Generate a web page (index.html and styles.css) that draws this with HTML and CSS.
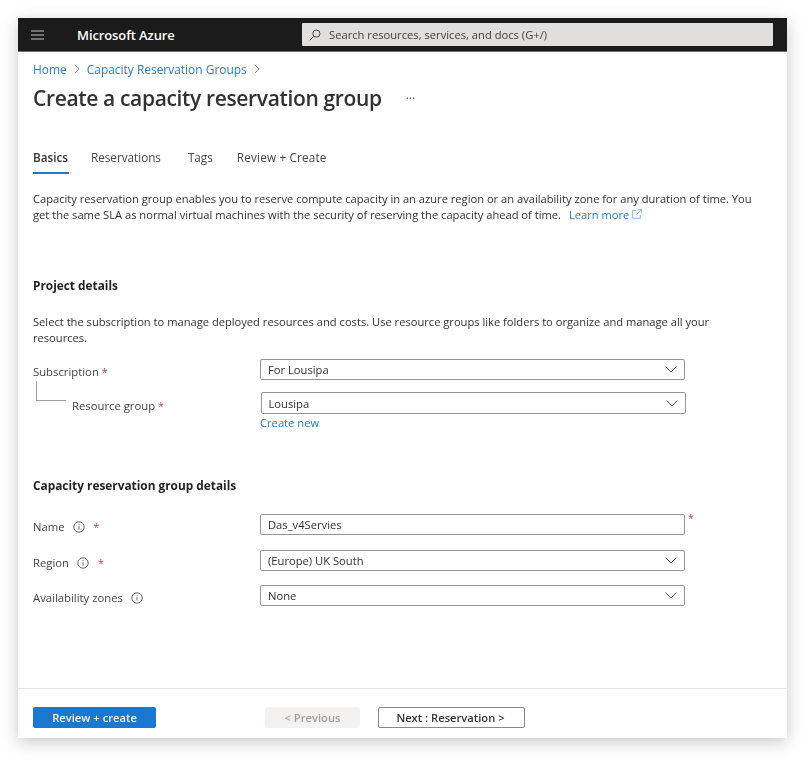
FILE: index.html
```html
<!DOCTYPE html>
<html lang="en">
<head>
<meta charset="utf-8">
<title>Create a capacity reservation group</title>
<link rel="stylesheet" href="styles.css">
</head>
<body>
<div class="panel">
  <header class="topbar">
    <svg class="menu-icon" width="13" height="10" viewBox="0 0 13 10"><path d="M0 1h13M0 5h13M0 9h13" stroke="#c8c8c8" stroke-width="1.1" fill="none"/></svg>
    <div class="brand">Microsoft Azure</div>
    <div class="search">
      <svg class="search-icon" width="12" height="12" viewBox="0 0 12 12"><circle cx="7.4" cy="4.6" r="3.6" fill="none" stroke="#444" stroke-width="1"/><path d="M4.8 7.2 0.8 11.2" stroke="#444" stroke-width="1" fill="none"/></svg>
      <span>Search resources, services, and docs (G+/)</span>
    </div>
  </header>
  <main class="content">
    <nav class="crumbs">
      <a class="link">Home</a>
      <svg class="crumb-sep" width="6" height="10" viewBox="0 0 6 10"><path d="M0.8 0.8 5 5 0.8 9.2" fill="none" stroke="#777" stroke-width="0.9"/></svg>
      <a class="link">Capacity Reservation Groups</a>
      <svg class="crumb-sep" width="6" height="10" viewBox="0 0 6 10"><path d="M0.8 0.8 5 5 0.8 9.2" fill="none" stroke="#777" stroke-width="0.9"/></svg>
    </nav>
    <div class="title-row">
      <h1>Create a capacity reservation group</h1>
      <span class="more">···</span>
    </div>
    <div class="tabs">
      <div class="tab active">Basics</div>
      <div class="tab">Reservations</div>
      <div class="tab tags">Tags</div>
      <div class="tab review">Review + Create</div>
    </div>
    <p class="desc">Capacity reservation group enables you to reserve compute capacity in an azure region or an availability zone for any duration of time. You get the same SLA as normal virtual machines with the security of reserving the capacity ahead of time. <a class="link learn">Learn more <svg width="10" height="10" viewBox="0 0 10 10"><path d="M4 1.5H.7v7.8h7.6V6M5.5.6h3.9v3.8M9.2.8 4.2 5.8" fill="none" stroke="#6a9fd6" stroke-width="0.8"/></svg></a></p>

    <h2 class="project">Project details</h2>
    <p class="desc sub">Select the subscription to manage deployed resources and costs. Use resource groups like folders to organize and manage all your resources.</p>

    <div class="row sub-row">
      <label class="lab">Subscription <span class="req">*</span></label>
      <div class="field"><span>For Lousipa</span><svg class="chev" width="12" height="7" viewBox="0 0 12 7"><path d="M.6.6 6 6 11.4.6" fill="none" stroke="#555" stroke-width="1"/></svg></div>
    </div>
    <div class="row rg-row">
      <div class="tree"></div>
      <label class="lab rg-lab">Resource group <span class="req">*</span></label>
      <div class="field rg-field"><span>Lousipa</span><svg class="chev" width="12" height="7" viewBox="0 0 12 7"><path d="M.6.6 6 6 11.4.6" fill="none" stroke="#555" stroke-width="1"/></svg></div>
    </div>
    <a class="link create">Create new</a>

    <h2 class="details">Capacity reservation group details</h2>

    <div class="row name-row">
      <label class="lab low">Name <svg class="info" width="12" height="12" viewBox="0 0 12 12"><circle cx="6" cy="6" r="5.2" fill="none" stroke="#555" stroke-width="0.9"/><path d="M6 5.2v3.4M6 3.2v1" stroke="#555" stroke-width="0.9"/></svg> <span class="req gap">*</span></label>
      <div class="field"><span>Das_v4Servies</span></div>
      <span class="req after">*</span>
    </div>
    <div class="row region-row">
      <label class="lab low">Region <svg class="info" width="12" height="12" viewBox="0 0 12 12"><circle cx="6" cy="6" r="5.2" fill="none" stroke="#555" stroke-width="0.9"/><path d="M6 5.2v3.4M6 3.2v1" stroke="#555" stroke-width="0.9"/></svg> <span class="req gap">*</span></label>
      <div class="field"><span>(Europe) UK South</span><svg class="chev" width="12" height="7" viewBox="0 0 12 7"><path d="M.6.6 6 6 11.4.6" fill="none" stroke="#555" stroke-width="1"/></svg></div>
    </div>
    <div class="row az-row">
      <label class="lab low">Availability zones <svg class="info" width="12" height="12" viewBox="0 0 12 12"><circle cx="6" cy="6" r="5.2" fill="none" stroke="#555" stroke-width="0.9"/><path d="M6 5.2v3.4M6 3.2v1" stroke="#555" stroke-width="0.9"/></svg></label>
      <div class="field"><span>None</span><svg class="chev" width="12" height="7" viewBox="0 0 12 7"><path d="M.6.6 6 6 11.4.6" fill="none" stroke="#555" stroke-width="1"/></svg></div>
    </div>
  </main>
  <footer class="foot">
    <button class="btn primary">Review + create</button>
    <button class="btn disabled">&lt; Previous</button>
    <button class="btn outline">Next : Reservation &gt;</button>
  </footer>
</div>
</body>
</html>
```
FILE: styles.css
```css
* { box-sizing: border-box; }
html, body { margin: 0; height: 761px; background: #fff; overflow: hidden; }
body { font-family: "Open Sans", "Noto Sans", sans-serif; color: #323130; font-size: 11.3px; }
.panel {
  width: 769px; height: 720px; margin: 18px 0 0 18px; background: #fff;
  display: flex; flex-direction: column;
  box-shadow: 0 4px 16px rgba(0,0,0,.22);
  filter: blur(.3px);
}
.topbar {
  height: 34px; flex: none; background: #1b1b1b; border-bottom: 1px solid #6d6d6d;
  display: flex; align-items: center; color: #fff;
}
.menu-icon { margin-left: 13px; flex: none; }
.brand { margin-left: 33px; width: 225px; font-size: 13px; font-weight: 600; letter-spacing: -.1px; }
.search {
  width: 471px; height: 23.5px; background: #e1dfdd; border-radius: 1px;
  display: flex; align-items: center; color: #3f3f3f; font-size: 11.2px;
}
.search-icon { margin: 0 8px 0 7px; }
.content { flex: 1; padding-left: 15px; }
.link { color: #2b7cc4; text-decoration: none; }
.crumbs { display: flex; align-items: center; height: 18px; margin-top: 8px; font-size: 11.95px; }
.crumb-sep { margin: 0 7px; }
.title-row { display: flex; align-items: center; margin-top: 5px; height: 30px; }
h1 { margin: 0; font-size: 21px; font-weight: 600; color: #323130; letter-spacing: -.35px; }
.more { margin-left: 24px; font-size: 12px; color: #666; }
.tabs { display: flex; margin-top: 35px; height: 26px; font-size: 11.7px; }
.tab { margin-right: 27px; padding-top: 1px; color: #444; }
.tab.tags { margin-right: 24px; }
.tab.review { letter-spacing: .2px; }
.tab.active { font-weight: 600; border-bottom: 2px solid #1b7bd0; width: 36px; margin-right: 22px; white-space: nowrap; color: #323130; }
p { margin: 0; }
.desc { width: 724px; line-height: 16px; font-size: 11.15px; }
.tabs + .desc { margin-top: 17px; }
.learn { margin-left: 5px; }
.learn svg { vertical-align: 0; }
h2 { margin: 0; font-size: 11.85px; font-weight: 700; color: #252423; line-height: 16px; }
.project { margin-top: 54px; }
.desc.sub { margin-top: 21px; }
.row { position: relative; display: flex; align-items: center; }
.lab { width: 227px; flex: none; color: #444; font-size: 11.3px; }
.lab.low { padding-top: 4px; }
.req { color: #b4484d; font-size: 10.5px; }
.gap { margin-left: 6px; }
.info { vertical-align: -2px; margin-left: 5px; }
.field {
  width: 425px; height: 21px; border: 1px solid #979593; border-radius: 2px;
  display: flex; align-items: center; justify-content: space-between;
  padding: 0 7px 0 7px; font-size: 11.2px; color: #323130;
}
.sub-row { margin-top: 13px; }
.sub-row .lab { padding-top: 3px; }
.rg-row { margin-top: 12px; height: 22px; }
.rg-lab { padding-left: 39px; padding-top: 4px; }
.rg-field { margin-left: .5px; height: 22px; }
.tree { position: absolute; left: 3px; top: -11px; width: 30px; height: 20px; border-left: 1px solid #a19f9d; border-bottom: 1px solid #a19f9d; }
.create { display: block; margin: 1px 0 0 227px; font-size: 11.2px; line-height: 16px; }
.details { margin-top: 46px; }
.name-row { margin-top: 21px; }
.after { position: absolute; left: 655px; top: -3px; font-size: 10px; }
.region-row { margin-top: 14.5px; }
.az-row { margin-top: 14.5px; }
.foot {
  height: 50px; flex: none; border-top: 1px solid #e4e4e4; padding: 18px 0 0 15px; display: flex; align-items: flex-start;
}
.btn { height: 21px; border-radius: 2px; font: 600 11.2px "Open Sans", sans-serif; padding: 0; }
.primary { width: 123px; background: #1b78d0; border: 0; color: #f0f6fc; }
.disabled { width: 95px; margin-left: 109px; background: #f3f2f1; border: 0; color: #a19f9d; }
.outline { width: 147px; margin-left: 18px; background: #fff; border: 1px solid #8a8886; color: #323130; padding-right: 2px; }
```
